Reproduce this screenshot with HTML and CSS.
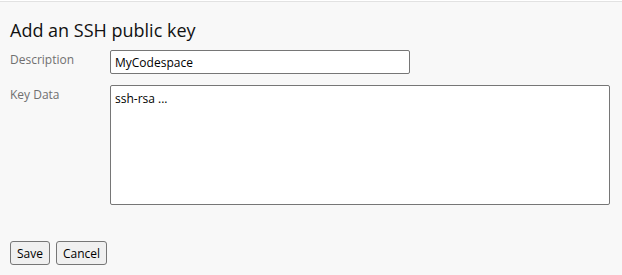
FILE: index.html
```html
<!doctype html>
<html>

<head lang="en">
  <meta charset="utf-8">
  <title>Add an SSH public key</title>
  <link rel="stylesheet" href="styles.css">
</head>

<body>
  <div class="page">
    <h2>Add an SSH public key</h2>

    <form>
      <div class="row">
        <label for="description">Description</label>
        <input id="description" type="text" value="MyCodespace" />
      </div>
      <div class="row">
        <label for="keydata">Key Data</label>
        <textarea id="keydata">ssh-rsa ...</textarea>
      </div>

      <div class="actions">
        <button type="button">Save</button>
        <button type="button">Cancel</button>
      </div>
    </form>
  </div>
</body>

</html>
```

FILE: styles.css
```css
body {
  font-family: "Open Sans", sans-serif;
  font-size: 12px;
  margin: 0;
  background: #f8f8f8;
  border-top: 1px solid #fff;
}

.page {
  border-top: 1px solid #e2e2e2;
  padding: 0 10px;
}

h2 {
  font-weight: 400;
  font-size: 18px;
  margin: 16px 0 8px 0;
  color: #111;
}

.row {
  display: flex;
  align-items: flex-start;
  margin-bottom: 11px;
}

label {
  width: 100px;
  color: #707070;
  padding-top: 1px;
}

input,
textarea {
  font-family: "Open Sans", sans-serif;
  font-size: 12px;
  color: #000;
  background: #fff;
  border: 1px solid #767676;
  border-radius: 2px;
  margin: 0;
  box-sizing: border-box;
}

input {
  width: 300px;
  height: 24px;
  padding: 0 4px;
}

textarea {
  width: 500px;
  height: 120px;
  padding: 4px;
  resize: none;
}

.actions {
  margin-top: 36px;
  display: flex;
  gap: 6px;
}

button {
  font-family: "Open Sans", sans-serif;
  font-size: 12px;
  color: #000;
  background: #f0f0f0;
  border: 1px solid #767676;
  border-radius: 3px;
  padding: 0 6px;
  height: 24px;
}
```
